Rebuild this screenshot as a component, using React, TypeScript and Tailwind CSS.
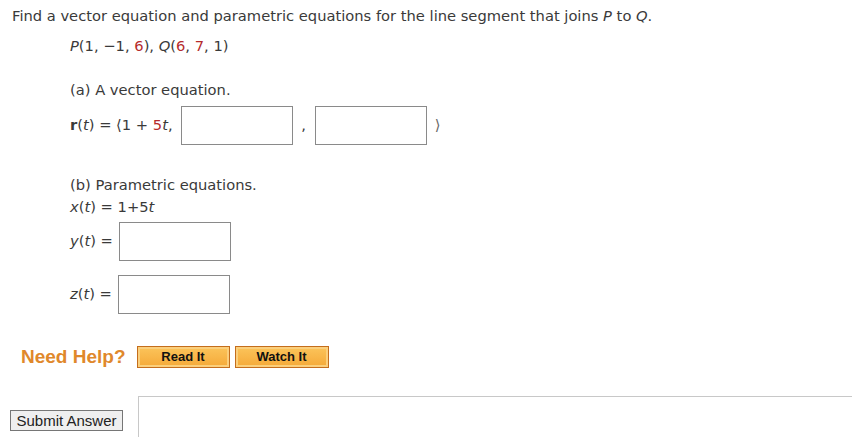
import React from 'react';

const Red = ({ children }: { children: React.ReactNode }) => <span className="text-[#b52b2b]">{children}</span>;

const Box = ({ className = '' }: { className?: string }) => (
  <input type="text" className={`w-[112px] h-[39px] border border-[#8a8a8a] bg-white outline-none ${className}`} />
);

const OrangeButton = ({ label, width }: { label: string; width: string }) => (
  <button
    className={`${width} h-[22px] border border-[#c46d1c] bg-gradient-to-b from-[#fbc45a] to-[#f5a937] shadow-[inset_0_0_0_2px_#fbcf7c] text-[13px] font-bold text-[#111] flex items-center justify-center`}
    style={{ fontFamily: '"Liberation Sans", Arial, sans-serif' }}
  >
    {label}
  </button>
);

export default function App() {
  return (
    <div
      className="w-[852px] h-[437px] bg-white text-[#3a3a3a] text-[14.7px] leading-none overflow-hidden"
      style={{ fontFamily: '"DejaVu Sans", Verdana, sans-serif' }}
    >
      <div className="pl-[12px] pt-[9px]">
        Find a vector equation and parametric equations for the line segment that joins <i>P</i> to <i>Q</i>.
      </div>

      <div className="pl-[70px]">
        <div className="mt-[15px]">
          <i>P</i>(1, −1, <Red>6</Red>), <i>Q</i>(<Red>6</Red>, <Red>7</Red>, 1)
        </div>

        {/* (a) */}
        <div className="mt-[30px]">(a) A vector equation.</div>
        <div className="mt-[8px] flex items-center h-[39px]">
          <span className="mr-[8px]">
            <b>r</b>(<i>t</i>) = ⟨1 + <Red>5</Red><i>t</i>,
          </span>
          <Box />
          <span className="w-[22px] text-center">,</span>
          <Box />
          <span className="ml-[8px] text-[#666]">⟩</span>
        </div>

        {/* (b) */}
        <div className="mt-[33px]">(b) Parametric equations.</div>
        <div className="mt-[7px]">
          <i>x</i>(<i>t</i>) = 1+5<i>t</i>
        </div>
        <div className="mt-[7px] flex items-center gap-[6px]">
          <span>
            <i>y</i>(<i>t</i>) =
          </span>
          <Box className="w-[111px]" />
        </div>
        <div className="mt-[14px] flex items-center gap-[6px]">
          <span>
            <i>z</i>(<i>t</i>) =
          </span>
          <Box className="w-[111px]" />
        </div>
      </div>

      {/* help */}
      <div className="pl-[21px] mt-[32px] flex items-center">
        <span
          className="text-[19px] font-bold text-[#e0882b] mr-[11px]"
          style={{ fontFamily: '"Liberation Sans", Arial, sans-serif' }}
        >
          Need Help?
        </span>
        <OrangeButton label="Read It" width="w-[93px]" />
        <div className="w-[5px]" />
        <OrangeButton label="Watch It" width="w-[94px]" />
      </div>

      <div className="mt-[28px] flex items-start">
        <div className="pl-[10px] pt-[14px]">
          <button
            className="w-[113px] h-[21px] border border-[#767676] bg-[#efefef] text-[15px] text-[#222] flex items-center justify-center"
            style={{ fontFamily: '"Liberation Sans", Arial, sans-serif' }}
          >
            Submit Answer
          </button>
        </div>
        <div className="ml-[15px] flex-1 h-[60px] border-t border-l border-[#c8c8c8]" />
      </div>
    </div>
  );
}
